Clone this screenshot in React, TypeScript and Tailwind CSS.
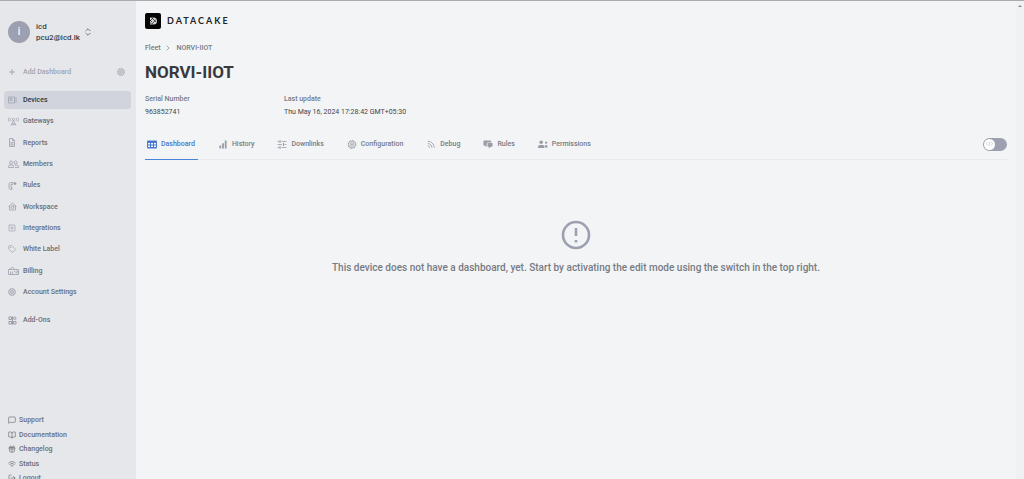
import React, { useState } from "react";
import {
  BookOpen, ChevronRight, ChevronsUpDown, Gift, LogOut, MessageSquare, Plus, SquarePlus, Tag, Wifi,
} from "lucide-react";

type IconProps = { className?: string };

/* ── Icons ── */
const DeviceIcon = ({ className }: IconProps) => (
  <svg viewBox="0 0 18 16" className={className} fill="none" stroke="currentColor" strokeWidth="1.4" aria-hidden="true">
    <path d="M1 2h12v12H1zM4 5h4v4H4zM16 2v12" />
  </svg>
);

const GatewayIcon = ({ className }: IconProps) => (
  <svg viewBox="0 0 22 18" className={className} fill="none" stroke="currentColor" strokeWidth="1.4" aria-hidden="true">
    <circle cx="11" cy="5" r="2" />
    <path d="M11 7L6 17M11 7l5 10M8 13l6 3M14 13l-6 3M6 8a5 5 0 0 1 0-6M16 8a5 5 0 0 0 0-6M2 9a8 8 0 0 1 0-8M20 9a8 8 0 0 0 0-8" />
  </svg>
);

const ReportIcon = ({ className }: IconProps) => (
  <svg viewBox="0 0 16 18" className={className} fill="none" stroke="currentColor" strokeWidth="1.6" aria-hidden="true">
    <path d="M3 1h6l4 4v12H3zM9 1v4h4M5 9h6M5 12h6M5 14h6" />
  </svg>
);

const MembersIcon = ({ className }: IconProps) => (
  <svg viewBox="0 0 22 16" className={className} fill="none" stroke="currentColor" strokeWidth="1.6" aria-hidden="true">
    <circle cx="6" cy="5" r="3" />
    <circle cx="15" cy="5" r="3" />
    <path d="M1 15v-2a3 3 0 0 1 3-3h4a3 3 0 0 1 3 3v2zM13 10h4a4 4 0 0 1 4 4v1h-7" />
  </svg>
);

const RuleIcon = ({ className }: IconProps) => (
  <svg viewBox="0 0 18 18" className={className} fill="none" stroke="currentColor" strokeWidth="1.6" aria-hidden="true">
    <path d="M10 3H6a4 4 0 0 0-4 4v6a4 4 0 0 0 4 4h2v-4H6V7h3z" />
    <circle cx="14" cy="5" r="2" fill="currentColor" />
  </svg>
);

const WorkspaceIcon = ({ className }: IconProps) => (
  <svg viewBox="0 0 18 18" className={className} fill="none" stroke="currentColor" strokeWidth="1.5" aria-hidden="true">
    <path d="M1 9l8-7 8 7M3 8v8h12V8" />
    <circle cx="9" cy="10" r="3" />
    <path d="M9 10l3-3" />
  </svg>
);

const BillingIcon = ({ className }: IconProps) => (
  <svg viewBox="0 0 22 18" className={className} fill="none" stroke="currentColor" strokeWidth="1.5" aria-hidden="true">
    <path d="M1 7h20v10H1zM2 7l7-5 4 5M5 17v-6M9 17v-6M12 10l7 5M16 10h3v3" />
  </svg>
);

const AddOnsIcon = ({ className }: IconProps) => (
  <svg viewBox="0 0 18 18" className={className} fill="none" stroke="currentColor" strokeWidth="1.6" aria-hidden="true">
    <rect x="2" y="2" width="5" height="5" />
    <rect x="2" y="11" width="5" height="5" />
    <circle cx="13.500" cy="4.500" r="2.500" />
    <path d="M11 11h5v5h-5zM9 1v16" />
  </svg>
);

const TableIcon = ({ className }: IconProps) => (
  <svg viewBox="0 0 20 18" className={className} aria-hidden="true">
    <rect y="1" width="20" height="16" rx="2" fill="currentColor" />
    <path d="M2 6h4v3H2zM8 6h4v3H8zM14 6h4v3h-4zM2 11h4v3H2zM8 11h4v3H8zM14 11h4v3h-4z" fill="#f3f4f6" />
  </svg>
);

const BarsIcon = ({ className }: IconProps) => (
  <svg viewBox="0 0 20 20" className={className} fill="currentColor" aria-hidden="true">
    <path d="M2 12h4v7H2zM8 7h4v12H8zM14 1h4v18h-4z" />
  </svg>
);

const SlidersIcon = ({ className }: IconProps) => (
  <svg viewBox="0 0 20 18" className={className} fill="none" stroke="currentColor" aria-hidden="true">
    <path d="M1 3h3M9 3h10M1 9h9M15 9h4M1 15h3M9 15h10" strokeWidth="1.6" />
    <path d="M6 0v6M13 6v6M6 12v6" strokeWidth="2.200" />
  </svg>
);

const GearIcon = ({ className }: IconProps) => (
  <svg viewBox="0 0 20 20" className={className} fill="none" stroke="currentColor" strokeWidth="1.8" aria-hidden="true">
    <circle cx="10" cy="10" r="8" />
    <circle cx="10" cy="10" r="8.7" strokeDasharray="3.4 3.4" />
    <circle cx="10" cy="10" r="4" />
    <circle cx="10" cy="10" r="1" />
  </svg>
);

const SignalIcon = ({ className }: IconProps) => (
  <svg viewBox="0 0 20 20" className={className} fill="none" stroke="currentColor" strokeWidth="2" aria-hidden="true">
    <path d="M3 3c8 0 14 6 14 14M3 8c5 0 9 4 9 9M3 13c2 0 4 2 4 4" />
  </svg>
);

const RulesTabIcon = ({ className }: IconProps) => (
  <svg viewBox="0 0 22 20" className={className} fill="currentColor" aria-hidden="true">
    <path d="M3 1h13a2 2 0 0 1 2 2v2h-6a4 4 0 0 0-4 4v7l-3-3H3a2 2 0 0 1-2-2V3a2 2 0 0 1 2-2z" />
    <path d="M12 6h7a2 2 0 0 1 2 2v5a2 2 0 0 1-2 2h-2l-4 4v-4h-1a2 2 0 0 1-2-2V8a2 2 0 0 1 2-2z" />
  </svg>
);

const PeopleIcon = ({ className }: IconProps) => (
  <svg viewBox="0 0 22 20" className={className} fill="currentColor" aria-hidden="true">
    <circle cx="7" cy="5" r="4" />
    <path d="M0 18v-3a4 4 0 0 1 4-4h6a4 4 0 0 1 4 4v3z" />
    <circle cx="18" cy="6" r="2.500" />
    <circle cx="18" cy="14" r="3" />
  </svg>
);

const Logo = () => (
  <svg viewBox="0 0 32 32" className="size-4" aria-hidden="true">
    <rect width="32" height="32" rx="4" fill="#050506" />
    <path d="M10 9h7a7 7 0 0 1 0 14h-7z" fill="#d4d4d6" />
    <path d="M9 13l5 5M13 9l9 9M9 18l5 5M17 9l-7 7M22 13l-8 9" stroke="#050506" strokeWidth="1.3" />
  </svg>
);

/* ── Data ── */
const NAV = [
  { label: "Devices", icon: DeviceIcon, size: "h-2 w-[9px]" },
  { label: "Gateways", icon: GatewayIcon, size: "h-[9px] w-[11px]" },
  { label: "Reports", icon: ReportIcon, size: "h-[9px] w-2" },
  { label: "Members", icon: MembersIcon, size: "h-2 w-[11px]" },
  { label: "Rules", icon: RuleIcon, size: "size-[9px]" },
  { label: "Workspace", icon: WorkspaceIcon, size: "size-[9px]" },
  { label: "Integrations", icon: SquarePlus, size: "size-2" },
  { label: "White Label", icon: Tag, size: "size-2" },
  { label: "Billing", icon: BillingIcon, size: "h-[9px] w-[11px]" },
  { label: "Account Settings", icon: GearIcon, size: "size-2" },
];

const LINKS = [
  { label: "Support", icon: MessageSquare },
  { label: "Documentation", icon: BookOpen },
  { label: "Changelog", icon: Gift },
  { label: "Status", icon: Wifi },
  { label: "Logout", icon: LogOut },
];

const TABS = [
  { label: "Dashboard", icon: TableIcon },
  { label: "History", icon: BarsIcon },
  { label: "Downlinks", icon: SlidersIcon },
  { label: "Configuration", icon: GearIcon },
  { label: "Debug", icon: SignalIcon },
  { label: "Rules", icon: RulesTabIcon },
  { label: "Permissions", icon: PeopleIcon },
];

function Sidebar() {
  return (
    <aside className="flex w-[136px] shrink-0 flex-col overflow-hidden bg-[#e5e7eb] px-1">
      <button className="mt-5 ml-1 flex items-center self-start text-left">
        <span className="flex size-[22px] items-center justify-center rounded-full bg-[#9ca0b0] text-[10px] font-medium text-white">i</span>
        <span className="ml-[6px] flex flex-col text-[8px] leading-[11px] font-medium text-[#3c3f45]">
          <span>icd</span>
          <span>pcu2@icd.lk</span>
        </span>
        <ChevronsUpDown size={10} className="ml-[3px] text-[#5f636b]" />
      </button>

      <div className="mt-5 flex h-[18px] items-center justify-between px-1 text-[#9fa3ae]">
        <button className="flex items-center font-medium">
          <Plus size={8} strokeWidth={3} className="mr-[7px]" />
          Add Dashboard
        </button>
        <button aria-label="Dashboard settings" className="mr-[3px]">
          <GearIcon className="size-2" />
        </button>
      </div>

      <nav className="mt-[10px] flex flex-col">
        <div className="flex h-[210px] flex-col justify-between">
          {NAV.map(({ label, icon: Icon, size }, i) => (
            <a
              key={label}
              href="#"
              className={`flex h-[18px] items-center rounded-[3px] pl-1 font-medium ${i === 0 ? "mr-[1px] bg-[#d1d4dd] text-[#32353b]" : "text-[#6b6e75]"}`}
            >
              <span className="flex w-[15px] text-[#9a9eaa]"><Icon className={size} /></span>
              {label}
            </a>
          ))}
        </div>
        <a href="#" className="mt-[10px] flex h-[18px] items-center pl-1 font-medium text-[#6b6e75]">
          <span className="flex w-[15px] text-[#8b8f9a]"><AddOnsIcon className="size-[9px]" /></span>
          Add-Ons
        </a>
      </nav>

      <div className="mt-auto -mb-1 flex h-[68px] shrink-0 flex-col justify-between pl-1">
        {LINKS.map(({ label, icon: Icon }) => (
          <a key={label} href="#" className="flex h-[10px] items-center gap-[3px] font-medium text-[#6b6e75]">
            <Icon className="size-2" />
            {label}
          </a>
        ))}
      </div>
    </aside>
  );
}

export default function App() {
  const [tab, setTab] = useState("Dashboard");
  const [editing, setEditing] = useState(false);

  return (
    <div className="flex h-screen overflow-hidden border-t border-[#a9abb0] bg-[#f3f4f6] font-['Roboto',sans-serif] text-[7px] leading-[10px]">
      <Sidebar />

      <main className="min-w-0 flex-1 pt-3 pr-[9px] pl-[9px]">
        <div className="flex items-center gap-[6px] text-[#222326]">
          <Logo />
          <span className="font-['Lato',sans-serif] text-[9px] font-bold tracking-[2px]">DATACAKE</span>
        </div>

        <div className="mt-[14px] flex items-center gap-1 font-medium text-[#777b83]">
          <a href="#">Fleet</a>
          <ChevronRight size={8} />
          <a href="#">NORVI-IIOT</a>
        </div>

        <h1 className="mt-[9px] text-[17px] leading-5 font-bold text-[#38393c]">NORVI-IIOT</h1>

        <dl className="mt-3 flex text-[#42454b]">
          <div className="w-[139px]">
            <dt className="font-medium text-[#777b83]">Serial Number</dt>
            <dd className="mt-[3px]">963852741</dd>
          </div>
          <div>
            <dt className="font-medium text-[#777b83]">Last update</dt>
            <dd className="mt-[3px]">Thu May 16, 2024 17:28:42 GMT+05:30</dd>
          </div>
        </dl>

        {/* Tabs */}
        <div className="mt-3 flex h-[31px] items-stretch justify-between border-b border-[#e9eaed]">
          <div role="tablist" className="flex gap-[18px]">
            {TABS.map(({ label, icon: Icon }) => (
              <button
                key={label}
                role="tab"
                aria-selected={tab === label}
                onClick={() => setTab(label)}
                className={`-mb-px flex items-center gap-1 border-b pr-[3px] pl-[2px] font-medium ${tab === label ? "border-[#4a84d8] text-[#4777cf]" : "border-transparent text-[#777b83]"}`}
              >
                <Icon className={`h-[9px] w-[10px] ${tab === label ? "" : "text-[#9a9ca6]"}`} />
                {label}
              </button>
            ))}
          </div>
          <button
            role="switch"
            aria-checked={editing}
            aria-label="Edit mode"
            onClick={() => setEditing(v => !v)}
            className={`flex h-[13px] w-6 items-center self-center rounded-full bg-[#9ca0b0] p-px ${editing ? "justify-end" : ""}`}
          >
            <span className="flex size-[11px] items-center justify-center rounded-full bg-white text-[#b5b8c2]">
              <svg viewBox="0 0 16 12" className="w-[7px]" fill="none" stroke="currentColor" strokeWidth="1.5" aria-hidden="true">
                <path d="M4 2L1 6l3 4M12 2l3 4-3 4M9 1L7 11" />
              </svg>
            </span>
          </button>
        </div>

        {/* Empty state */}
        <div className="mt-[60px] flex flex-col items-center text-center text-[10px] leading-3 font-medium text-[#777b83]">
          <svg viewBox="0 0 30 30" className="size-[30px] text-[#9ca0b0]" fill="none" stroke="currentColor" aria-hidden="true">
            <circle cx="15" cy="15" r="13" strokeWidth="2.600" />
            <path d="M15 8v8M15 20v2.500" strokeWidth="2.600" />
          </svg>
          <p className="mt-3">This device does not have a dashboard, yet. Start by activating the edit mode using the switch in the top right.</p>
        </div>
      </main>

      <div className="w-2 shrink-0 bg-[#f0f1f3] pt-1" aria-hidden="true">
        <svg viewBox="0 0 8 4" className="mx-auto w-1" fill="#85878c">
          <path d="M4 0l4 4H0z" />
        </svg>
      </div>
    </div>
  );
}
